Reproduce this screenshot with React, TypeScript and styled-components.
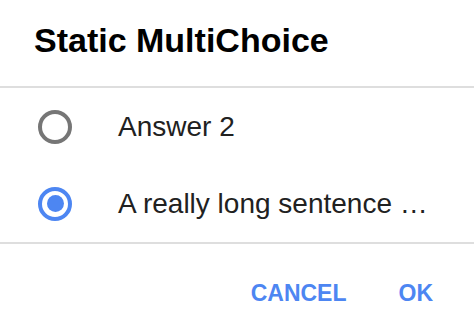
import React from "react";
import styled, { createGlobalStyle } from "styled-components";

const Global = createGlobalStyle`
  html, body {
    margin: 0;
    padding: 0;
    background: #ffffff;
  }
  body {
    font-family: "Liberation Sans", Arial, Helvetica, sans-serif;
  }
`;

const Dialog = styled.div`
  width: 474px;
  height: 331px;
  display: flex;
  flex-direction: column;
  background: #ffffff;
  overflow: hidden;
`;

const Title = styled.h1`
  margin: 0;
  padding: 20px 0 26px 34px;
  font-size: 34px;
  line-height: 40px;
  font-weight: 700;
  color: #000000;
`;

const Divider = styled.div`
  height: 2px;
  background: #dedede;
  flex: none;
`;

const List = styled.div`
  display: flex;
  flex-direction: column;
`;

const Row = styled.label`
  height: 77px;
  display: flex;
  align-items: center;
  padding-left: 38px;
  gap: 46px;
  cursor: pointer;
`;

const Radio = styled.span<{ $checked: boolean }>`
  box-sizing: border-box;
  width: 34px;
  height: 34px;
  border-radius: 50%;
  border: 4px solid ${(p) => (p.$checked ? "#4d86f2" : "#767676")};
  display: flex;
  align-items: center;
  justify-content: center;
  flex: none;
  &::after {
    content: "";
    display: ${(p) => (p.$checked ? "block" : "none")};
    width: 17px;
    height: 17px;
    border-radius: 50%;
    background: #4d86f2;
  }
`;

const OptionText = styled.span`
  font-size: 28px;
  color: #212121;
  white-space: nowrap;
`;

const Actions = styled.div`
  display: flex;
  justify-content: flex-end;
  align-items: flex-start;
  gap: 52px;
  padding: 36px 41px 0 0;
`;

const ActionButton = styled.button`
  border: none;
  background: none;
  padding: 0;
  margin: 0;
  font-family: "Liberation Sans", Arial, Helvetica, sans-serif;
  font-size: 23px;
  font-weight: 700;
  color: #4d86f2;
  text-transform: uppercase;
  cursor: pointer;
`;

const options = [
  { label: "Answer 2", checked: false },
  { label: "A really long sentence \u2026", checked: true },
];

export default function App() {
  return (
    <>
      <Global />
      <Dialog>
        <Title>Static MultiChoice</Title>
        <Divider />
        <List>
          {options.map((o) => (
            <Row key={o.label}>
              <Radio $checked={o.checked} />
              <OptionText>{o.label}</OptionText>
            </Row>
          ))}
        </List>
        <Divider />
        <Actions>
          <ActionButton>Cancel</ActionButton>
          <ActionButton>OK</ActionButton>
        </Actions>
      </Dialog>
    </>
  );
}
